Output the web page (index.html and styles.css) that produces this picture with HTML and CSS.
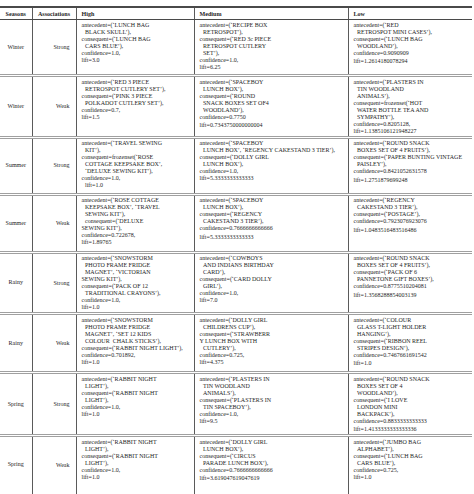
FILE: index.html
```html
<!DOCTYPE html>
<html>
<head>
<meta charset="utf-8">
<link rel="stylesheet" href="styles.css">
</head>
<body>
<table class="tbl">
<colgroup><col class="w-season"><col class="w-assoc"><col class="w-high"><col class="w-med"><col class="w-low"></colgroup>
<thead>
<tr><th class="center">Seasons</th><th class="center">Associations</th><th>High</th><th>Medium</th><th>Low</th></tr>
</thead>
<tbody>
<tr>
<td class="season">Winter</td><td class="assoc">Strong</td>
<td class="rule"><div class="ln">antecedent=(‘LUNCH BAG</div><div class="ln in">BLACK SKULL’),</div><div class="ln">consequent=(‘LUNCH BAG</div><div class="ln in">CARS BLUE’),</div><div class="ln">confidence=1.0,</div><div class="ln">lift=3.0</div></td>
<td class="rule"><div class="ln">antecedent=(‘RECIPE BOX</div><div class="ln in">RETROSPOT’),</div><div class="ln">consequent=(‘RED 3c PIECE</div><div class="ln in">RETROSPOT CUTLERY</div><div class="ln in">SET’),</div><div class="ln">confidence=1.0,</div><div class="ln">lift=6.25</div></td>
<td class="rule"><div class="ln">antecedent=(‘RED</div><div class="ln in">RETROSPOT MINI CASES’),</div><div class="ln">consequent=(‘LUNCH BAG</div><div class="ln in">WOODLAND’),</div><div class="ln">confidence=0.9090909</div><div class="ln gap">lift=1.2614180078294</div></td>
</tr>
<tr>
<td class="season">Winter</td><td class="assoc">Weak</td>
<td class="rule"><div class="ln">antecedent=(‘RED 3 PIECE</div><div class="ln in">RETROSPOT CUTLERY SET’),</div><div class="ln">consequent=(‘PINK 3 PIECE</div><div class="ln in">POLKADOT CUTLERY SET’),</div><div class="ln">confidence=0.7,</div><div class="ln">lift=1.5</div></td>
<td class="rule"><div class="ln">antecedent=(‘SPACEBOY</div><div class="ln in">LUNCH BOX’),</div><div class="ln">consequent=(‘ROUND</div><div class="ln in">SNACK BOXES SET OF4</div><div class="ln in">WOODLAND’),</div><div class="ln">confidence=0.7750</div><div class="ln gap">lift=0.7343750000000004</div></td>
<td class="rule"><div class="ln">antecedent=(‘PLASTERS IN</div><div class="ln in">TIN WOODLAND</div><div class="ln in">ANIMALS’),</div><div class="ln">consequent=frozenset(‘HOT</div><div class="ln in">WATER BOTTLE TEA AND</div><div class="ln in">SYMPATHY’),</div><div class="ln">confidence=0.8205128,</div><div class="ln">lift=1.1385106121948227</div></td>
</tr>
<tr>
<td class="season">Summer</td><td class="assoc">Strong</td>
<td class="rule"><div class="ln">antecedent=(‘TRAVEL SEWING</div><div class="ln in">KIT’),</div><div class="ln">consequent=frozenset(‘ROSE</div><div class="ln in">COTTAGE KEEPSAKE BOX’,</div><div class="ln in">‘DELUXE SEWING KIT’),</div><div class="ln">confidence=1.0,</div><div class="ln in">lift=1.0</div></td>
<td class="rule"><div class="ln">antecedent=(‘SPACEBOY</div><div class="ln in">LUNCH BOX’, ‘REGENCY CAKESTAND 3 TIER’),</div><div class="ln">consequent=(‘DOLLY GIRL</div><div class="ln in">LUNCH BOX’),</div><div class="ln">confidence=1.0,</div><div class="ln">lift=5.3333333333333</div></td>
<td class="rule"><div class="ln">antecedent=(‘ROUND SNACK</div><div class="ln in">BOXES SET OF 4 FRUITS’),</div><div class="ln">consequent=(‘PAPER BUNTING VINTAGE</div><div class="ln in">PAISLEY’),</div><div class="ln">confidence=0.8421052631578</div><div class="ln gap">lift=1.2751879699248</div></td>
</tr>
<tr>
<td class="season">Summer</td><td class="assoc">Weak</td>
<td class="rule"><div class="ln">antecedent=(‘ROSE COTTAGE</div><div class="ln in">KEEPSAKE BOX’, ‘TRAVEL</div><div class="ln in">SEWING KIT’),</div><div class="ln in">consequent=(‘DELUXE</div><div class="ln">SEWING KIT’),</div><div class="ln">confidence=0.722678,</div><div class="ln">lift=1.89765</div></td>
<td class="rule"><div class="ln">antecedent=(‘SPACEBOY</div><div class="ln in">LUNCH BOX’),</div><div class="ln">consequent=(‘REGENCY</div><div class="ln in">CAKESTAND 3 TIER’),</div><div class="ln">confidence=0.7666666666666</div><div class="ln gap">lift=5.3333333333333</div></td>
<td class="rule"><div class="ln">antecedent=(‘REGENCY</div><div class="ln in">CAKESTAND 3 TIER’),</div><div class="ln">consequent=(‘POSTAGE’),</div><div class="ln">confidence=0.7923076923076</div><div class="ln gap">lift=1.0483516483516486</div></td>
</tr>
<tr>
<td class="season">Rainy</td><td class="assoc">Strong</td>
<td class="rule"><div class="ln">antecedent=(‘SNOWSTORM</div><div class="ln in">PHOTO FRAME FRIDGE</div><div class="ln in">MAGNET’, ‘VICTORIAN</div><div class="ln">SEWING KIT’),</div><div class="ln">consequent=(‘PACK OF 12</div><div class="ln in">TRADITIONAL CRAYONS’),</div><div class="ln">confidence=1.0,</div><div class="ln">lift=1.0</div></td>
<td class="rule"><div class="ln">antecedent=(‘COWBOYS</div><div class="ln in">AND INDIANS BIRTHDAY</div><div class="ln in">CARD’),</div><div class="ln">consequent=(‘CARD DOLLY</div><div class="ln in">GIRL’),</div><div class="ln">confidence=1.0,</div><div class="ln">lift=7.0</div></td>
<td class="rule"><div class="ln">antecedent=(‘ROUND SNACK</div><div class="ln in">BOXES SET OF 4 FRUITS’),</div><div class="ln">consequent=(‘PACK OF 6</div><div class="ln in">PANNETONE GIFT BOXES’),</div><div class="ln">confidence=0.8775510204081</div><div class="ln gap">lift=1.3568288854003139</div></td>
</tr>
<tr>
<td class="season">Rainy</td><td class="assoc">Weak</td>
<td class="rule"><div class="ln">antecedent=(‘SNOWSTORM</div><div class="ln in">PHOTO FRAME FRIDGE</div><div class="ln in">MAGNET’, ‘SET 12 KIDS</div><div class="ln in">COLOUR&nbsp; CHALK STICKS’),</div><div class="ln">consequent=(‘RABBIT NIGHT LIGHT’),</div><div class="ln">confidence=0.701892,</div><div class="ln">lift=1.0</div></td>
<td class="rule"><div class="ln">antecedent=(‘DOLLY GIRL</div><div class="ln in">CHILDRENS CUP’),</div><div class="ln">consequent=(‘STRAWBERR</div><div class="ln">Y LUNCH BOX WITH</div><div class="ln in">CUTLERY’),</div><div class="ln">confidence=0.725,</div><div class="ln">lift=4.375</div></td>
<td class="rule"><div class="ln">antecedent=(‘COLOUR</div><div class="ln in">GLASS T-LIGHT HOLDER</div><div class="ln in">HANGING’),</div><div class="ln">consequent=(‘RIBBON REEL</div><div class="ln in">STRIPES DESIGN’),</div><div class="ln">confidence=0.7467661691542</div><div class="ln gap">lift=1.0</div></td>
</tr>
<tr>
<td class="season">Spring</td><td class="assoc">Strong</td>
<td class="rule"><div class="ln">antecedent=(‘RABBIT NIGHT</div><div class="ln in">LIGHT’),</div><div class="ln">consequent=(‘RABBIT NIGHT</div><div class="ln in">LIGHT’),</div><div class="ln">confidence=1.0,</div><div class="ln">lift=1.0</div></td>
<td class="rule"><div class="ln">antecedent=(‘PLASTERS IN</div><div class="ln in">TIN WOODLAND</div><div class="ln in">ANIMALS’),</div><div class="ln">consequent=(‘PLASTERS IN</div><div class="ln in">TIN SPACEBOY’),</div><div class="ln">confidence=1.0,</div><div class="ln">lift=9.5</div></td>
<td class="rule"><div class="ln">antecedent=(‘ROUND SNACK</div><div class="ln in">BOXES SET OF 4</div><div class="ln in">WOODLAND’),</div><div class="ln">consequent=(‘I LOVE</div><div class="ln in">LONDON MINI</div><div class="ln in">BACKPACK’),</div><div class="ln">confidence=0.8833333333333</div><div class="ln gap">lift=1.4133333333333336</div></td>
</tr>
<tr class="last">
<td class="season">Spring</td><td class="assoc">Weak</td>
<td class="rule"><div class="ln">antecedent=(‘RABBIT NIGHT</div><div class="ln in">LIGHT’),</div><div class="ln">consequent=(‘RABBIT NIGHT</div><div class="ln in">LIGHT’),</div><div class="ln">confidence=1.0,</div><div class="ln">lift=1.0</div></td>
<td class="rule"><div class="ln">antecedent=(‘DOLLY GIRL</div><div class="ln in">LUNCH BOX’),</div><div class="ln">consequent=(‘CIRCUS</div><div class="ln in">PARADE LUNCH BOX’),</div><div class="ln">confidence=0.7666666666666</div><div class="ln gap">lift=3.619047619047619</div></td>
<td class="rule"><div class="ln">antecedent=(‘JUMBO BAG</div><div class="ln in">ALPHABET’),</div><div class="ln">consequent=(‘LUNCH BAG</div><div class="ln in">CARS BLUE’),</div><div class="ln">confidence=0.725,</div><div class="ln">lift=1.0</div></td>
</tr>
</tbody>
</table>
</body>
</html>
```
FILE: styles.css
```css
html, body {
  margin: 0;
  padding: 0;
  background: #ffffff;
}
body {
  color: #262626;
  font-family: "Liberation Serif", "Times New Roman", serif;
}
.tbl {
  border-collapse: collapse;
  table-layout: fixed;
  width: 472px;
  margin-top: 6px;
  border-top: 2px solid #4a4a4a;
}
.w-season { width: 32px; }
.w-assoc { width: 44px; }
.w-high { width: 118px; }
.w-med { width: 154px; }
.w-low { width: 124px; }

th {
  font-size: 6.1px;
  font-weight: bold;
  text-align: left;
  height: 11px;
  padding: 0 5px;
  border-bottom: 1.5px solid #4a4a4a;
  white-space: nowrap;
}
th.center { text-align: center; padding: 0; }
th + th, td + td { border-left: 1px solid #5a5a5a; }

td {
  font-size: 6px;
  line-height: 7px;
  padding: 1.5px 5px 1px 5px;
}
tbody tr + tr td { border-top: 3px double #a0a0a0; }

.season { text-align: center; vertical-align: middle; padding: 0; }
.assoc { text-align: right; vertical-align: middle; padding-right: 6px; }
.rule { vertical-align: top; }
.last .season, .last .assoc { padding-bottom: 12px; }

.ln { white-space: nowrap; }
.ln.in { padding-left: 3.5px; }
.ln.gap { margin-top: 1.5px; }

tbody tr:nth-child(1) { height: 56px; }
tbody tr:nth-child(2) { height: 57px; }
tbody tr:nth-child(3) { height: 57px; }
tbody tr:nth-child(4) { height: 58px; }
tbody tr:nth-child(5) { height: 59px; }
tbody tr:nth-child(6) { height: 59px; }
tbody tr:nth-child(7) { height: 59px; }
tbody tr:nth-child(8) { height: 69px; }
```
